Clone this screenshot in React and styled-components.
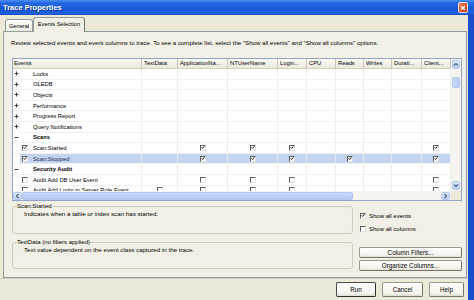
import React from 'react';
import styled, { createGlobalStyle } from 'styled-components';

const GlobalStyle = createGlobalStyle`
  html, body {
    margin: 0;
    padding: 0;
    background: #ECE9D8;
  }
  body {
    font-family: "Liberation Sans", Arial, sans-serif;
    color: #000;
  }
`;

const COLS = '129px 36px 50px 50px 29px 29px 28px 28px 30px 29px';

const Window = styled.div`
  width: 474px;
  height: 300px;
  display: flex;
  flex-direction: column;
  background: #1A4FCB;
  overflow: hidden;
`;
const TitleBar = styled.div`
  height: 15px;
  flex: none;
  display: flex;
  align-items: center;
  justify-content: space-between;
  padding: 0 6px 0 3px;
  background: linear-gradient(#4C8FF2 0%, #2267E2 20%, #1657D8 60%, #1E60DE 90%, #1448C4 100%);
`;
const Title = styled.div`
  color: #fff;
  font-size: 7.5px;
  font-weight: bold;
  text-shadow: 1px 1px 0 rgba(0, 20, 90, 0.5);
`;
const CloseButton = styled.div`
  width: 10px;
  height: 11px;
  box-sizing: border-box;
  border: 1px solid #F4E3DC;
  border-radius: 2px;
  background: linear-gradient(135deg, #EE8A64, #D5491F 60%, #C23A14);
  display: flex;
  align-items: center;
  justify-content: center;
`;
const Body = styled.div`
  flex: 1;
  display: flex;
  flex-direction: column;
  margin-right: 6px;
  background: #ECE9D8;
`;
const TabStrip = styled.div`
  height: 16px;
  flex: none;
  display: flex;
  align-items: flex-end;
  padding-left: 5px;
`;
const Tab = styled.div`
  position: relative;
  z-index: ${(p) => (p.$active ? 1 : 0)};
  width: ${(p) => p.$w}px;
  height: ${(p) => (p.$active ? 15 : 12)}px;
  margin-bottom: ${(p) => (p.$active ? -1 : 0)}px;
  box-sizing: border-box;
  border: 1px solid #919B9C;
  border-bottom: none;
  border-right-color: ${(p) => (p.$active ? '#6E7575' : '#919B9C')};
  border-radius: 3px 3px 0 0;
  background: ${(p) => (p.$active ? '#F2F0E6' : 'linear-gradient(#FFFFFF, #ECEBE4)')};
  font-size: 5.7px;
  display: flex;
  align-items: center;
  justify-content: center;
  padding-bottom: ${(p) => (p.$active ? 2 : 0)}px;
  white-space: nowrap;
`;
const Panel = styled.div`
  height: 247px;
  flex: none;
  box-sizing: border-box;
  margin: 0 1px 0 3px;
  border: 1px solid #919B9C;
  background: #F2F0E6;
  display: flex;
  flex-direction: column;
  padding: 0 4px 0 8px;
`;
const Intro = styled.div`
  font-size: 6.1px;
  line-height: 8px;
  margin: 7px 0 0 -1px;
  white-space: nowrap;
`;
const Grid = styled.div`
  margin-top: 11px;
  display: grid;
  grid-template-columns: 438px 10px;
  grid-template-rows: 132px 9px;
  border: 1px solid #8FA6C2;
  background: #fff;
`;
const GridMain = styled.div`
  overflow: hidden;
`;
const HeaderRow = styled.div`
  display: grid;
  grid-template-columns: ${COLS};
  height: 10px;
  box-sizing: border-box;
  background: linear-gradient(#FAFAF6, #EBE9DC);
  border-bottom: 1px solid #D4D0C0;
`;
const HeaderCell = styled.div`
  font-size: 5.8px;
  line-height: 9px;
  padding-left: ${(p) => (p.$first ? 1 : 2)}px;
  border-right: 1px solid #C9C5B5;
  white-space: nowrap;
  overflow: hidden;
`;
const Row = styled.div`
  display: grid;
  grid-template-columns: ${COLS};
  height: 10.6px;
  box-sizing: border-box;
  border-bottom: 1px solid #F1F1F1;
  background: ${(p) => (p.$sel ? '#C4D4EF' : '#fff')};
`;
const Cell = styled.div`
  display: flex;
  align-items: center;
  justify-content: center;
  border-right: 1px solid #EDEDED;
`;
const EventCell = styled.div`
  display: flex;
  align-items: center;
  border-right: 1px solid #EDEDED;
  overflow: hidden;
`;
const Toggle = styled.div`
  width: 7px;
  height: 100%;
  flex: none;
  background: #fff;
  display: flex;
  align-items: center;
  justify-content: center;
`;
const CheckSlot = styled.div`
  width: 10px;
  flex: none;
  display: flex;
  justify-content: center;
`;
const EventName = styled.div`
  padding-left: 3px;
  font-size: 5.8px;
  font-weight: ${(p) => (p.$bold ? 'bold' : 'normal')};
  white-space: nowrap;
  color: ${(p) => (p.$sel ? '#1B2A55' : '#000')};
`;
const Box = styled.span`
  position: relative;
  width: 6px;
  height: 6px;
  flex: none;
  box-sizing: border-box;
  border-top: 1px solid #5E5E5E;
  border-left: 1px solid #5E5E5E;
  border-right: 1px solid #E2E2E2;
  border-bottom: 1px solid #E2E2E2;
  background: #fff;
  display: inline-flex;
  align-items: center;
  justify-content: center;
`;
const VScroll = styled.div`
  background: #F5F4EF;
  display: flex;
  flex-direction: column;
  align-items: center;
  padding: 1px 0;
`;
const HScroll = styled.div`
  background: #F5F4EF;
  display: flex;
  align-items: center;
  padding: 0 1px 0 0;
`;
const Corner = styled.div`
  background: #ECE9D8;
`;
const ScrollBtn = styled.div`
  width: ${(p) => (p.$h ? 9 : 8)}px;
  height: ${(p) => (p.$h ? 8 : 9)}px;
  flex: none;
  box-sizing: border-box;
  border: 1px solid #B6C9F2;
  border-radius: 2px;
  background: linear-gradient(#E0E9FE, #BACDF8);
  display: flex;
  align-items: center;
  justify-content: center;
`;
const Thumb = styled.div`
  flex: none;
  box-sizing: border-box;
  border: 1px solid #B1C5F3;
  border-radius: 2px;
  background: ${(p) => (p.$h ? 'linear-gradient(#CBD9FC, #B7CBF7)' : 'linear-gradient(90deg, #CBD9FC, #B7CBF7)')};
  width: ${(p) => (p.$h ? '331px' : '8px')};
  height: ${(p) => (p.$h ? '8px' : '11px')};
  margin-top: ${(p) => (p.$h ? 0 : 8)}px;
`;
const Spacer = styled.div`
  flex: 1;
`;
const BottomArea = styled.div`
  display: flex;
  gap: 4px;
  margin-top: 2px;
`;
const GroupColumn = styled.div`
  width: 341px;
  display: flex;
  flex-direction: column;
  gap: 5px;
`;
const Group = styled.fieldset`
  margin: 0;
  min-width: 0;
  padding: 0 0 ${(p) => p.$pb}px 4px;
  border: 1px solid #D0CDBD;
  border-radius: 3px;
`;
const Legend = styled.legend`
  padding: 0;
  font-size: 6px;
  line-height: 7px;
`;
const Desc = styled.div`
  margin-left: 7px;
  font-size: 6.2px;
  line-height: 8px;
  white-space: nowrap;
`;
const Side = styled.div`
  flex: 1;
  display: flex;
  flex-direction: column;
  padding: 8px 0 0 2px;
`;
const CheckRow = styled.label`
  display: flex;
  align-items: center;
  gap: 3px;
  height: 9px;
  margin: ${(p) => (p.$first ? 0 : 4)}px 0 0 1px;
  font-size: 6px;
`;
const Button = styled.div`
  box-sizing: border-box;
  width: ${(p) => (p.$w ? `${p.$w}px` : '100%')};
  height: ${(p) => p.$h || 11}px;
  margin-top: ${(p) => p.$mt || 0}px;
  border: 1px solid ${(p) => (p.$primary ? '#4A4A4A' : '#9A9889')};
  border-right-color: ${(p) => (p.$primary ? '#2E2E2E' : '#77756A')};
  border-bottom-color: ${(p) => (p.$primary ? '#2E2E2E' : '#77756A')};
  border-radius: 2px;
  background: linear-gradient(#FFFFFF, #F3F2EC 80%, #DEDBCF);
  font-size: 6.3px;
  display: flex;
  align-items: center;
  justify-content: center;
  white-space: nowrap;
`;
const Footer = styled.div`
  flex: 1;
  display: flex;
  justify-content: flex-end;
  align-items: flex-start;
  gap: 6px;
  padding: 4px 4px 0 0;
  box-shadow: inset 0 1px 0 #D2CFC0;
`;

const Check = ({ on }) => (
  <Box>
    {on && (
      <svg width="5" height="5" viewBox="0 0 5 5">
        <path d="M0.8 2.4 L2 3.7 L4.3 0.9" fill="none" stroke="#111" strokeWidth="1.2" />
      </svg>
    )}
  </Box>
);

const ToggleGlyph = ({ open }) => (
  <svg width="5" height="5" viewBox="0 0 5 5">
    <path d="M0.5 2.5 H4.5" stroke="#333" strokeWidth="0.9" />
    {!open && <path d="M2.5 0.5 V4.5" stroke="#333" strokeWidth="0.9" />}
  </svg>
);

const Chevron = ({ dir }) => {
  const d = {
    up: 'M1 3.5 L3 1.5 L5 3.5',
    down: 'M1 1.5 L3 3.5 L5 1.5',
    left: 'M3.5 1 L1.5 3 L3.5 5',
    right: 'M1.5 1 L3.5 3 L1.5 5',
  }[dir];
  return (
    <svg width="6" height="6" viewBox="0 0 6 6">
      <path d={d} fill="none" stroke="#4D6185" strokeWidth="1.1" />
    </svg>
  );
};

const columns = ['TextData', 'ApplicationNa...', 'NTUserName', 'Login...', 'CPU', 'Reads', 'Writes', 'Durati...', 'Client...'];

const rows = [
  { kind: 'cat', name: 'Locks' },
  { kind: 'cat', name: 'OLEDB' },
  { kind: 'cat', name: 'Objects' },
  { kind: 'cat', name: 'Performance' },
  { kind: 'cat', name: 'Progress Report' },
  { kind: 'cat', name: 'Query Notifications' },
  { kind: 'open', name: 'Scans' },
  { kind: 'ev', name: 'Scan:Started', on: true, cols: [null, true, true, true, null, null, null, null, true] },
  { kind: 'ev', name: 'Scan:Stopped', on: true, sel: true, cols: [null, true, true, true, null, true, null, null, true] },
  { kind: 'open', name: 'Security Audit' },
  { kind: 'ev', name: 'Audit Add DB User Event', on: false, cols: [null, false, false, false, null, null, null, null, false] },
  { kind: 'ev', name: 'Audit Add Login to Server Role Event', on: false, cols: [false, false, false, false, null, null, null, null, false] },
];

const EventRow = ({ row }) => {
  const cols = row.cols || Array(9).fill(null);
  return (
    <Row $sel={row.sel}>
      <EventCell>
        <Toggle>{row.kind !== 'ev' && <ToggleGlyph open={row.kind === 'open'} />}</Toggle>
        <CheckSlot>{row.kind === 'ev' && <Check on={row.on} />}</CheckSlot>
        <EventName $bold={row.kind === 'open'} $sel={row.sel}>{row.name}</EventName>
      </EventCell>
      {cols.map((v, i) => (
        <Cell key={i}>{v !== null && <Check on={v} />}</Cell>
      ))}
    </Row>
  );
};

export default function App() {
  return (
    <>
      <GlobalStyle />
      <Window>
        <TitleBar>
          <Title>Trace Properties</Title>
          <CloseButton>
            <svg width="6" height="6" viewBox="0 0 6 6">
              <path d="M1 1 L5 5 M5 1 L1 5" stroke="#fff" strokeWidth="1.3" />
            </svg>
          </CloseButton>
        </TitleBar>
        <Body>
          <TabStrip>
            <Tab $w={28}>General</Tab>
            <Tab $w={52} $active>Events Selection</Tab>
          </TabStrip>
          <Panel>
            <Intro>
              Review selected events and event columns to trace. To see a complete list, select the "Show all events" and "Show all columns" options.
            </Intro>
            <Grid>
              <GridMain>
                <HeaderRow>
                  <HeaderCell $first>Events</HeaderCell>
                  {columns.map((c) => (
                    <HeaderCell key={c}>{c}</HeaderCell>
                  ))}
                </HeaderRow>
                {rows.map((r) => (
                  <EventRow key={r.name} row={r} />
                ))}
              </GridMain>
              <VScroll>
                <ScrollBtn><Chevron dir="up" /></ScrollBtn>
                <Thumb />
                <Spacer />
                <ScrollBtn><Chevron dir="down" /></ScrollBtn>
              </VScroll>
              <HScroll>
                <ScrollBtn $h><Chevron dir="left" /></ScrollBtn>
                <Thumb $h />
                <Spacer />
                <ScrollBtn $h><Chevron dir="right" /></ScrollBtn>
              </HScroll>
              <Corner />
            </Grid>
            <BottomArea>
              <GroupColumn>
                <Group $pb={15}>
                  <Legend>Scan:Started</Legend>
                  <Desc>Indicates when a table or index scan has started.</Desc>
                </Group>
                <Group $pb={14}>
                  <Legend>TextData (no filters applied)</Legend>
                  <Desc>Text value dependent on the event class captured in the trace.</Desc>
                </Group>
              </GroupColumn>
              <Side>
                <CheckRow $first><Check on />Show all events</CheckRow>
                <CheckRow><Check on={false} />Show all columns</CheckRow>
                <Button $mt={14}>Column Filters...</Button>
                <Button $mt={2}>Organize Columns...</Button>
              </Side>
            </BottomArea>
          </Panel>
          <Footer>
            <Button $w={40} $h={15} $primary>Run</Button>
            <Button $w={41} $h={15}>Cancel</Button>
            <Button $w={35} $h={15}>Help</Button>
          </Footer>
        </Body>
      </Window>
    </>
  );
}
